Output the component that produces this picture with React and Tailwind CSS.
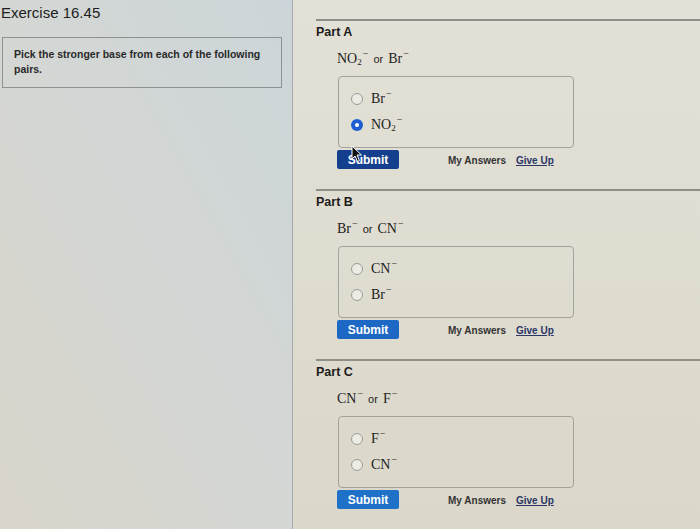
import React from "react";

const sans = { fontFamily: '"Liberation Sans", Arial, Helvetica, sans-serif' };
const serif = { fontFamily: '"Liberation Serif", "Times New Roman", serif' };

function Sup() {
  return <span className="inline-block text-[10px] leading-[0] relative top-[-6px] ml-[1px]">−</span>;
}

function Radio({ checked }) {
  if (checked) {
    return (
      <span className="w-[12px] h-[12px] rounded-full bg-[#1d5fd3] flex items-center justify-center shrink-0">
        <span className="w-[4px] h-[4px] rounded-full bg-white" />
      </span>
    );
  }
  return <span className="w-[12px] h-[12px] rounded-full border border-[#9c9c98] bg-[#ecebe4] shrink-0" />;
}

function Part({ label, question, options, selected, btn, cursor }) {
  return (
    <div className="relative border-t-2 border-[#8f8e88] h-[170px] pt-[4px]" style={sans}>
      <div className="font-bold text-[12.5px] leading-[15px] text-[#1c1c1c]">{label}</div>
      <div className="ml-[21px] mt-[8px] h-[18px] flex items-baseline text-[14px] text-[#222]">{question}</div>
      <div className="ml-[22px] mt-[10px] w-[236px] h-[72px] rounded-[4px] border border-[#a3a29c] flex flex-col justify-center gap-[10px] pl-[12px]">
        {options.map((o, i) => (
          <div key={i} className="flex items-center h-[16px] gap-[8px]">
            <Radio checked={selected === i} />
            <span className="text-[14px] text-[#222] leading-[16px]" style={serif}>{o}</span>
          </div>
        ))}
      </div>
      <div className="ml-[21px] mt-[2px] flex items-center">
        <div className={`w-[62px] h-[19px] rounded-[2px] flex items-center justify-center text-white font-bold text-[12px] ${btn}`}>Submit</div>
        <span className="ml-[49px] mt-[1px] text-[10px] font-bold text-[#333]">My Answers</span>
        <span className="ml-[10px] mt-[1px] text-[10px] font-bold text-[#2b3766] underline">Give Up</span>
      </div>
      {cursor && (
        <svg className="absolute left-[35px] top-[124px]" width="12" height="18" viewBox="0 0 12 18">
          <path d="M1 1 L1 14 L4 11 L6.5 16.5 L8.5 15.5 L6 10 L10.5 10 Z" fill="#111" stroke="#fff" strokeWidth="1" strokeLinejoin="round" />
        </svg>
      )}
    </div>
  );
}

const Sub2 = () => <sub className="text-[9px]">2</sub>;

export default function App() {
  return (
    <div className="w-[700px] h-[529px] flex overflow-hidden bg-linear-to-b from-[#e3e1d7] to-[#dbd7ca]" style={sans}>
      <div className="w-[293px] h-full border-r border-[#a5aaab] bg-linear-to-bl from-[#ccd5d9] via-[#d4d7d4] to-[#d9d5ca] flex flex-col">
        <div className="text-[15px] leading-[18px] text-[#1e1e1e] pl-[1px] pt-[4px]">Exercise 16.45</div>
        <div className="ml-[2px] mt-[15px] w-[280px] h-[51px] border border-[#8e9292] pl-[11px] pt-[9px] text-[10.5px] leading-[15px] font-bold text-[#2a2a2a]">
          Pick the stronger base from each of the following<br />pairs.
        </div>
      </div>
      <div className="flex-1 pl-[23px] pt-[19px]">
        <Part
          label="Part A"
          question={<><span style={serif}>NO<Sub2 /><Sup /></span><span className="text-[11px] mx-[5px]">or</span><span style={serif}>Br<Sup /></span></>}
          options={[<>Br<Sup /></>, <>NO<Sub2 /><Sup /></>]}
          selected={1}
          btn="bg-[#143f8e]"
          cursor
        />
        <Part
          label="Part B"
          question={<><span style={serif}>Br<Sup /></span><span className="text-[11px] mx-[5px]">or</span><span style={serif}>CN<Sup /></span></>}
          options={[<>CN<Sup /></>, <>Br<Sup /></>]}
          selected={-1}
          btn="bg-[#1d68c4]"
        />
        <Part
          label="Part C"
          question={<><span style={serif}>CN<Sup /></span><span className="text-[11px] mx-[5px]">or</span><span style={serif}>F<Sup /></span></>}
          options={[<>F<Sup /></>, <>CN<Sup /></>]}
          selected={-1}
          btn="bg-[#1e71c6]"
        />
      </div>
    </div>
  );
}
